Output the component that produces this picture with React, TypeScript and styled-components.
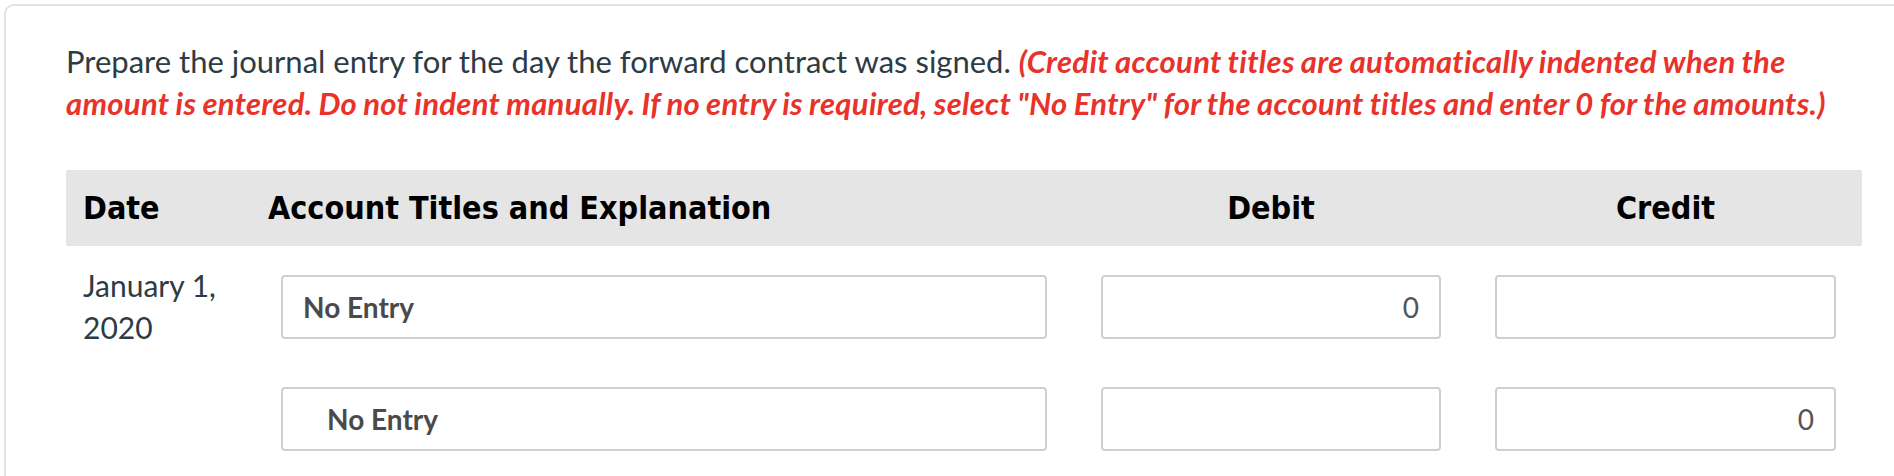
import styled, { createGlobalStyle } from 'styled-components';

const GlobalStyle = createGlobalStyle`
    html, body {
        margin: 0;
        padding: 0;
        background: #ffffff;
        overflow: hidden;
    }
`;

const Page = styled.div`
    padding: 4px 0 0 4px;
    width: 1990px;
`;

const Card = styled.section`
    box-sizing: border-box;
    width: 1922px;
    min-height: 520px;
    border: 2px solid #e2e2e2;
    border-radius: 10px;
    padding: 34px 60px 0 60px;
    font-family: 'Lato', 'Open Sans', sans-serif;
    font-variant-ligatures: none;
`;

const Prompt = styled.p`
    margin: 0;
    width: 1796px;
    font-size: 31px;
    line-height: 42px;
    color: #2d3b45;
`;

const Note = styled.em`
    font-weight: 700;
    font-style: italic;
    letter-spacing: 0.3px;
    word-spacing: -1px;
    color: #e8322a;
`;

const Table = styled.div`
    width: 1796px;
    margin-top: 46px;
`;

const HeaderRow = styled.div`
    display: grid;
    grid-template-columns: 185px 779px 394px 395px;
    align-items: center;
    height: 76px;
    padding-left: 17px;
    background: #e5e5e5;
`;

const HeadCell = styled.div<{ $center?: boolean; $inset?: boolean }>`
    font-family: 'DejaVu Sans Condensed', 'DejaVu Sans', sans-serif;
    font-weight: 700;
    font-size: 32px;
    color: #000;
    text-align: ${(p) => (p.$center ? 'center' : 'left')};
    padding-left: ${(p) => (p.$inset ? '54px' : '0')};
`;

const EntryRow = styled.div<{ $first?: boolean }>`
    display: grid;
    grid-template-columns: 185px 779px 394px 395px;
    align-items: start;
    padding-left: 17px;
    margin-top: ${(p) => (p.$first ? '18px' : '28px')};
    min-height: 84px;
`;

const DateCell = styled.div`
    font-size: 30px;
    line-height: 42px;
    color: #2d3b45;
`;

const Field = styled.div<{ $inset?: boolean; $indent?: boolean; $amount?: boolean }>`
    box-sizing: border-box;
    height: 64px;
    margin-top: 11px;
    margin-left: ${(p) => (p.$inset ? '54px' : '13px')};
    border: 2px solid #cfcfcf;
    border-radius: 4px;
    background: #fff;
    display: flex;
    align-items: center;
    justify-content: ${(p) => (p.$amount ? 'flex-end' : 'flex-start')};
    padding: 0 20px 0 ${(p) => (p.$indent ? '44px' : '20px')};
    font-size: 28px;
    font-weight: ${(p) => (p.$amount ? 400 : 700)};
    color: ${(p) => (p.$amount ? '#555' : '#4a4a4a')};
`;

const entries = [
    { date: 'January 1, 2020', account: 'No Entry', debit: '0', credit: '', indent: false },
    { date: '', account: 'No Entry', debit: '', credit: '0', indent: true },
];

export default function App() {
    return (
        <>
            <GlobalStyle />
            <Page>
                <Card>
                    <Prompt>
                        Prepare the journal entry for the day the forward contract was signed.{' '}
                        <Note>
                            (Credit account titles are automatically indented when the amount is entered. Do not
                            indent manually. If no entry is required, select "No Entry" for the account titles and
                            enter 0 for the amounts.)
                        </Note>
                    </Prompt>
                    <Table>
                        <HeaderRow>
                            <HeadCell>Date</HeadCell>
                            <HeadCell>Account Titles and Explanation</HeadCell>
                            <HeadCell $center $inset>Debit</HeadCell>
                            <HeadCell $center $inset>Credit</HeadCell>
                        </HeaderRow>
                        {entries.map((e, i) => (
                            <EntryRow key={i} $first={i === 0}>
                                <DateCell>{e.date}</DateCell>
                                <Field $indent={e.indent}>{e.account}</Field>
                                <Field $inset $amount>{e.debit}</Field>
                                <Field $inset $amount>{e.credit}</Field>
                            </EntryRow>
                        ))}
                    </Table>
                </Card>
            </Page>
        </>
    );
}
